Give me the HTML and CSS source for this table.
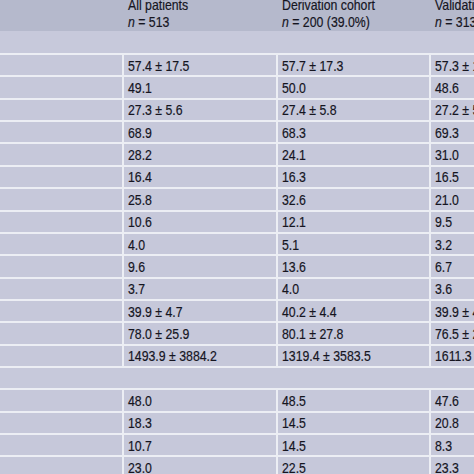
FILE: index.html
```html
<!DOCTYPE html>
<html>
<head>
<meta charset="utf-8">
<link rel="stylesheet" href="styles.css">
</head>
<body>
<div class="table">
  <div class="row head">
    <div class="cell"></div>
    <div class="cell"><div class="t">All patients</div><div class="t"><i>n</i> = 513</div></div>
    <div class="cell"><div class="t">Derivation cohort</div><div class="t"><i>n</i> = 200 (39.0%)</div></div>
    <div class="cell"><div class="t">Validation cohort</div><div class="t"><i>n</i> = 313 (61.0%)</div></div>
  </div>
  <div class="row section"><div class="cell"></div></div>
  <div class="row data"><div class="cell"></div><div class="cell"><span class="t">57.4 ± 17.5</span></div><div class="cell"><span class="t">57.7 ± 17.3</span></div><div class="cell"><span class="t">57.3 ± 17.7</span></div></div>
  <div class="row data"><div class="cell"></div><div class="cell"><span class="t">49.1</span></div><div class="cell"><span class="t">50.0</span></div><div class="cell"><span class="t">48.6</span></div></div>
  <div class="row data"><div class="cell"></div><div class="cell"><span class="t">27.3 ± 5.6</span></div><div class="cell"><span class="t">27.4 ± 5.8</span></div><div class="cell"><span class="t">27.2 ± 5.5</span></div></div>
  <div class="row data"><div class="cell"></div><div class="cell"><span class="t">68.9</span></div><div class="cell"><span class="t">68.3</span></div><div class="cell"><span class="t">69.3</span></div></div>
  <div class="row data"><div class="cell"></div><div class="cell"><span class="t">28.2</span></div><div class="cell"><span class="t">24.1</span></div><div class="cell"><span class="t">31.0</span></div></div>
  <div class="row data"><div class="cell"></div><div class="cell"><span class="t">16.4</span></div><div class="cell"><span class="t">16.3</span></div><div class="cell"><span class="t">16.5</span></div></div>
  <div class="row data"><div class="cell"></div><div class="cell"><span class="t">25.8</span></div><div class="cell"><span class="t">32.6</span></div><div class="cell"><span class="t">21.0</span></div></div>
  <div class="row data"><div class="cell"></div><div class="cell"><span class="t">10.6</span></div><div class="cell"><span class="t">12.1</span></div><div class="cell"><span class="t">9.5</span></div></div>
  <div class="row data"><div class="cell"></div><div class="cell"><span class="t">4.0</span></div><div class="cell"><span class="t">5.1</span></div><div class="cell"><span class="t">3.2</span></div></div>
  <div class="row data"><div class="cell"></div><div class="cell"><span class="t">9.6</span></div><div class="cell"><span class="t">13.6</span></div><div class="cell"><span class="t">6.7</span></div></div>
  <div class="row data"><div class="cell"></div><div class="cell"><span class="t">3.7</span></div><div class="cell"><span class="t">4.0</span></div><div class="cell"><span class="t">3.6</span></div></div>
  <div class="row data"><div class="cell"></div><div class="cell"><span class="t">39.9 ± 4.7</span></div><div class="cell"><span class="t">40.2 ± 4.4</span></div><div class="cell"><span class="t">39.9 ± 4.9</span></div></div>
  <div class="row data"><div class="cell"></div><div class="cell"><span class="t">78.0 ± 25.9</span></div><div class="cell"><span class="t">80.1 ± 27.8</span></div><div class="cell"><span class="t">76.5 ± 24.5</span></div></div>
  <div class="row data"><div class="cell"></div><div class="cell"><span class="t">1493.9 ± 3884.2</span></div><div class="cell"><span class="t">1319.4 ± 3583.5</span></div><div class="cell"><span class="t">1611.3 ± 4068.7</span></div></div>
  <div class="row section line"><div class="cell"></div></div>
  <div class="row data"><div class="cell"></div><div class="cell"><span class="t">48.0</span></div><div class="cell"><span class="t">48.5</span></div><div class="cell"><span class="t">47.6</span></div></div>
  <div class="row data"><div class="cell"></div><div class="cell"><span class="t">18.3</span></div><div class="cell"><span class="t">14.5</span></div><div class="cell"><span class="t">20.8</span></div></div>
  <div class="row data"><div class="cell"></div><div class="cell"><span class="t">10.7</span></div><div class="cell"><span class="t">14.5</span></div><div class="cell"><span class="t">8.3</span></div></div>
  <div class="row data"><div class="cell"></div><div class="cell"><span class="t">23.0</span></div><div class="cell"><span class="t">22.5</span></div><div class="cell"><span class="t">23.3</span></div></div>
</div>
</body>
</html>
```
FILE: styles.css
```css
html, body {
  margin: 0;
  padding: 0;
  width: 474px;
  height: 474px;
  overflow: hidden;
  background: #c6c8da;
}
.table {
  width: 600px;
  font-family: "Liberation Sans", Arial, sans-serif;
  font-size: 15px;
  color: #15151f;
}
.t {
  display: inline-block;
  transform: scaleX(0.82);
  transform-origin: 0 50%;
  white-space: nowrap;
  -webkit-text-stroke: 0.2px #15151f;
}
.head .t {
  display: block;
}
.row {
  display: grid;
  grid-template-columns: 122px 154px 153px 171px;
}
.head {
  height: 31px;
  background: #b5b9cc;
  line-height: 17px;
}
.head .cell {
  padding-left: 6px;
  margin-top: -4px;
  white-space: nowrap;
}
.section {
  display: block;
  height: 22px;
  background: #c7c9db;
}
.section.line {
  border-top: 2px solid #eceef4;
  height: 20.36px;
}
.data {
  height: 20.36px;
  border-top: 2px solid #eceef4;
  align-items: center;
}
.data .cell {
  padding-left: 4px;
  white-space: nowrap;
}
.data .cell + .cell {
  border-left: 2px solid #eceef4;
  height: 100%;
  display: flex;
  align-items: center;
}
```
